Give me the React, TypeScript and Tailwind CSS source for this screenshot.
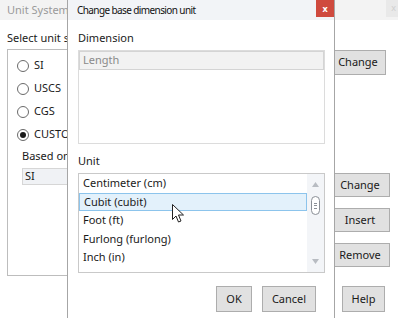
import React from "react";

const font = { fontFamily: '"Segoe UI", "Noto Sans", "Open Sans", sans-serif' };

function Radio({ label, checked }: { label: string; checked?: boolean }) {
  return (
    <div className="flex h-[23px] items-center gap-[5px]">
      <div className="flex h-[12px] w-[12px] items-center justify-center rounded-full border border-[#6a6a6a] bg-white">
        {checked && <div className="h-[6px] w-[6px] rounded-full bg-[#1a1a1a]" />}
      </div>
      <span className="text-[11px] text-[#1a1a1a]">{label}</span>
    </div>
  );
}

function Btn({ children, className }: { children: React.ReactNode; className?: string }) {
  return (
    <div
      className={
        "flex items-center justify-center border border-[#adadad] bg-[#e1e1e1] text-[11px] text-[#1a1a1a] " +
        (className ?? "")
      }
    >
      {children}
    </div>
  );
}

const units = [
  "Centimeter (cm)",
  "Cubit (cubit)",
  "Foot (ft)",
  "Furlong (furlong)",
  "Inch (in)",
  "Kilometer (km)",
];

export default function App() {
  return (
    <div className="relative h-[318px] w-[398px] overflow-hidden bg-white" style={font}>
      {/* Background window: Unit System */}
      <div className="flex h-[20px] items-center justify-between bg-[#f3f3f3]">
        <span className="pl-[7px] text-[11px] text-[#9a9a9a]">Unit System</span>
        <div className="flex h-[17px] w-[12px] items-start justify-end self-start bg-[#e9e9e9] pr-[2px] text-[9px] leading-[15px] text-[#cfcfcf]">
          x
        </div>
      </div>
      <div className="flex">
        <div className="w-[323px] pl-[7px] pt-[10px]">
          <div className="h-[16px] text-[11px] leading-[16px] text-[#1a1a1a]">Select unit system:</div>
          <div className="mt-[3px] h-[227px] w-[316px] border border-[#bdbdbd] pl-[9px] pt-[4px]">
            <Radio label="SI" />
            <Radio label="USCS" />
            <Radio label="CGS" />
            <Radio label="CUSTOM" checked />
            <div className="mt-[2px] pl-[5px] text-[11px] leading-[16px] text-[#1a1a1a]">Based on:</div>
            <div className="ml-[5px] mt-[4px] flex h-[17px] w-[200px] items-center border border-[#d6d6d6] bg-[#f0f2f5] pl-[2px] text-[11px] text-[#1a1a1a]">
              SI
            </div>
          </div>
        </div>
        <div className="flex flex-col items-start pl-[7px] pt-[30px]">
          <Btn className="h-[25px] w-[56px]">Change</Btn>
          <Btn className="mt-[98px] h-[24px] w-[60px]">Change</Btn>
          <Btn className="mt-[11px] h-[24px] w-[60px]">Insert</Btn>
          <Btn className="mt-[11px] h-[24px] w-[60px]">Remove</Btn>
          <Btn className="ml-[12px] mt-[19px] h-[26px] w-[43px]">Help</Btn>
        </div>
      </div>

      {/* Modal dialog over the window */}
      <div className="absolute left-[67px] top-0 flex h-[330px] w-[268px] flex-col border-x border-[#a6a6a6] bg-white">
        <div className="flex h-[20px] items-start justify-between bg-[#f2f4f7]">
          <span className="pl-[9px] text-[10px] leading-[20px] tracking-[-0.6px] text-[#111]">
            Change base dimension unit
          </span>
          <div className="flex h-[17px] w-[18px] items-center justify-center bg-[#cf4a3e] text-[9px] font-bold text-white">
            x
          </div>
        </div>
        <div className="pl-[10px]">
          <div className="mt-[10px] h-[16px] text-[11px] leading-[16px] text-[#1a1a1a]">Dimension</div>
          <div className="mt-[4px] h-[94px] w-[247px] border border-[#dcdcdc]">
            <div className="flex h-[19px] items-center border border-[#d4d4d4] bg-[#f2f2f2] pl-[3px] text-[11px] text-[#8a8a8a]">
              Length
            </div>
          </div>
          <div className="mt-[9px] h-[16px] text-[11px] leading-[16px] text-[#1a1a1a]">Unit</div>
          <div className="mt-[4px] flex h-[100px] w-[247px] overflow-hidden border border-[#c9c9c9]">
            <div className="flex-1">
              {units.map((u, i) => (
                <div
                  key={u}
                  className={
                    "flex h-[18.5px] items-center pl-[4px] text-[11px] text-[#1a1a1a] " +
                    (i === 1 ? "border border-[#8cc4ec] bg-[#e3f1fb] pl-[3px]" : "")
                  }
                >
                  {u}
                </div>
              ))}
            </div>
            <div className="flex w-[17px] flex-col items-center bg-[#f3f5f8]">
              <svg width="7" height="5" viewBox="0 0 7 5" className="mt-[8px]">
                <path d="M0 5 L3.5 0 L7 5 Z" fill="#b8bcc2" />
              </svg>
              <div className="mt-[9px] flex h-[19px] w-[9px] flex-col items-center justify-center gap-[1.5px] rounded-[5px] border border-[#8a8f96] bg-white">
                <div className="h-[1px] w-[3px] bg-[#8a8f96]" />
                <div className="h-[1px] w-[3px] bg-[#8a8f96]" />
                <div className="h-[1px] w-[3px] bg-[#8a8f96]" />
              </div>
              <div className="flex-1" />
              <svg width="7" height="5" viewBox="0 0 7 5" className="mb-[8px]">
                <path d="M0 0 L3.5 5 L7 0 Z" fill="#b8bcc2" />
              </svg>
            </div>
          </div>
          <div className="mt-[13px] flex justify-end gap-[10px] pr-[18px]">
            <Btn className="h-[26px] w-[36px] border-[#3d8fd8]">OK</Btn>
            <Btn className="h-[26px] w-[54px]">Cancel</Btn>
          </div>
        </div>
      </div>

      {/* Mouse pointer */}
      <svg
        width="13"
        height="20"
        viewBox="0 0 13 20"
        className="pointer-events-none absolute left-[172px] top-[204px]"
      >
        <path
          d="M0.5 0.5 L0.5 15.5 L4 12 L6.5 18 L9 17 L6.5 11 L11.5 11 Z"
          fill="white"
          stroke="#222"
          strokeWidth="1"
          strokeLinejoin="round"
        />
      </svg>
    </div>
  );
}
